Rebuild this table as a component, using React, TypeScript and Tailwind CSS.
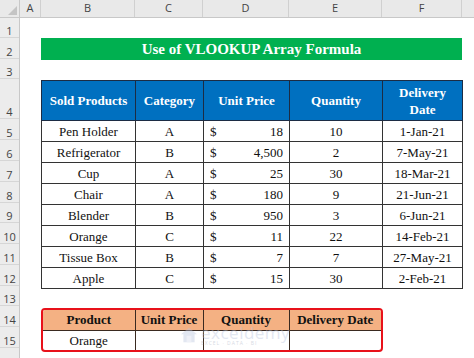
const cols = [
  { name: "A", w: "w-[21px]" },
  { name: "B", w: "w-[94px]" },
  { name: "C", w: "w-[68px]" },
  { name: "D", w: "w-[86px]" },
  { name: "E", w: "w-[93px]" },
  { name: "F", w: "w-[80px]" },
];

const rowHeights: [number, string][] = [
  [1, "h-[20px]"],
  [2, "h-[21px]"],
  [3, "h-[20px]"],
  [4, "h-[40px]"],
  [5, "h-[21px]"],
  [6, "h-[21px]"],
  [7, "h-[21px]"],
  [8, "h-[21px]"],
  [9, "h-[20px]"],
  [10, "h-[21px]"],
  [11, "h-[21px]"],
  [12, "h-[21px]"],
  [13, "h-[20px]"],
  [14, "h-[21px]"],
  [15, "h-[21px]"],
];

const products = [
  ["Pen Holder", "A", "18", "10", "1-Jan-21"],
  ["Refrigerator", "B", "4,500", "2", "7-May-21"],
  ["Cup", "A", "25", "30", "18-Mar-21"],
  ["Chair", "A", "180", "9", "21-Jun-21"],
  ["Blender", "B", "950", "3", "6-Jun-21"],
  ["Orange", "C", "11", "22", "14-Feb-21"],
  ["Tissue Box", "B", "7", "7", "27-May-21"],
  ["Apple", "C", "15", "30", "2-Feb-21"],
];

export default function App() {
  return (
    <div className="w-[474px] h-[358px] overflow-hidden bg-white font-['Liberation_Serif',serif] text-[13px] text-[#111]">
      {/* column headers */}
      <div className="flex h-[18px] bg-[#e9e9e9] border-b border-[#c8c8c8] font-['Open_Sans',sans-serif] text-[11px] text-[#444]">
        <div className="w-[20px] border-r border-[#c8c8c8] flex items-end justify-end p-[2px]">
          <div className="w-0 h-0 border-l-[9px] border-l-transparent border-b-[9px] border-b-[#c4c4c4]" />
        </div>
        {cols.map((c) => (
          <div key={c.name} className={`${c.w} border-r border-[#d0d0d0] flex items-center justify-center`}>
            {c.name}
          </div>
        ))}
        <div className="flex-1" />
      </div>

      <div className="flex">
        {/* row numbers */}
        <div className="w-[20px] bg-[#ececec] border-r border-[#c8c8c8] font-['Open_Sans',sans-serif] text-[11px] text-[#444] flex flex-col h-[340px]">
          {rowHeights.map(([n, h]) => (
            <div key={n} className={`${h} border-b border-[#d6d6d6] flex items-end justify-center pb-[1px] leading-none`}>
              {n}
            </div>
          ))}
          <div className="flex-1" />
        </div>

        {/* sheet content */}
        <div className="pl-[21px] flex flex-col">
          <div className="h-[20px]" />
          <div className="h-[22px] w-[421px] bg-[#00b050] text-white font-bold text-[15px] flex items-center justify-center">
            Use of VLOOKUP Array Formula
          </div>
          <div className="h-[20px]" />

          <table className="border-collapse w-[421px] table-fixed">
            <colgroup>
              <col className="w-[94px]" />
              <col className="w-[68px]" />
              <col className="w-[86px]" />
              <col className="w-[93px]" />
              <col className="w-[80px]" />
            </colgroup>
            <thead>
              <tr className="h-[40px] bg-[#0070c0] text-white font-bold">
                <th className="border border-[#1c2c44] text-center leading-[17px] px-0 whitespace-nowrap">Sold Products</th>
                <th className="border border-[#1c2c44] text-center leading-[17px]">Category</th>
                <th className="border border-[#1c2c44] text-center leading-[17px]">Unit Price</th>
                <th className="border border-[#1c2c44] text-center leading-[17px]">Quantity</th>
                <th className="border border-[#1c2c44] text-center leading-[17px] px-[12px]">Delivery Date</th>
              </tr>
            </thead>
            <tbody>
              {products.map((r) => (
                <tr key={r[0]} className="h-[21px] leading-none">
                  <td className="border border-[#333] text-center">{r[0]}</td>
                  <td className="border border-[#333] text-center">{r[1]}</td>
                  <td className="border border-[#333] px-[6px]">
                    <div className="flex justify-between">
                      <span>$</span>
                      <span>{r[2]}</span>
                    </div>
                  </td>
                  <td className="border border-[#333] text-center">{r[3]}</td>
                  <td className="border border-[#333] text-center">{r[4]}</td>
                </tr>
              ))}
            </tbody>
          </table>

          <div className="h-[19px]" />

          <div className="relative w-[342px] border-2 border-[#e8111a] rounded-[4px] overflow-hidden">
            <table className="border-collapse w-full table-fixed">
              <colgroup>
                <col className="w-[92px]" />
                <col className="w-[68px]" />
                <col className="w-[86px]" />
                <col />
              </colgroup>
              <tbody>
                <tr className="h-[20px] bg-[#f4b183] font-bold leading-none">
                  <td className="border-r border-b border-[#3a2a20] text-center">Product</td>
                  <td className="border-r border-b border-[#3a2a20] text-center">Unit Price</td>
                  <td className="border-r border-b border-[#3a2a20] text-center">Quantity</td>
                  <td className="border-b border-[#3a2a20] text-center">Delivery Date</td>
                </tr>
                <tr className="h-[20px] leading-none">
                  <td className="border-r border-[#3a2a20] text-center">Orange</td>
                  <td className="border-r border-[#3a2a20]"></td>
                  <td className="border-r border-[#3a2a20]"></td>
                  <td></td>
                </tr>
              </tbody>
            </table>
            {/* watermark */}
            <div className="absolute left-[137px] top-[14px] flex items-center gap-[3px] opacity-40 pointer-events-none">
              <svg width="18" height="16" viewBox="0 0 22 20">
                <path d="M11 1 L21 9 L18 9 L18 19 L4 19 L4 9 L1 9 Z" fill="#b9c4de" />
                <rect x="8" y="11" width="6" height="8" fill="#d6dcec" />
              </svg>
              <div className="flex flex-col items-start leading-none font-['Open_Sans',sans-serif]">
                <span className="text-[17px] text-[#b9c4de] tracking-[0.5px]">exceldemy</span>
                <span className="text-[5px] text-[#9aa4b8] tracking-[1px]">EXCEL · DATA · BI</span>
              </div>
            </div>
          </div>
        </div>
      </div>
    </div>
  );
}
